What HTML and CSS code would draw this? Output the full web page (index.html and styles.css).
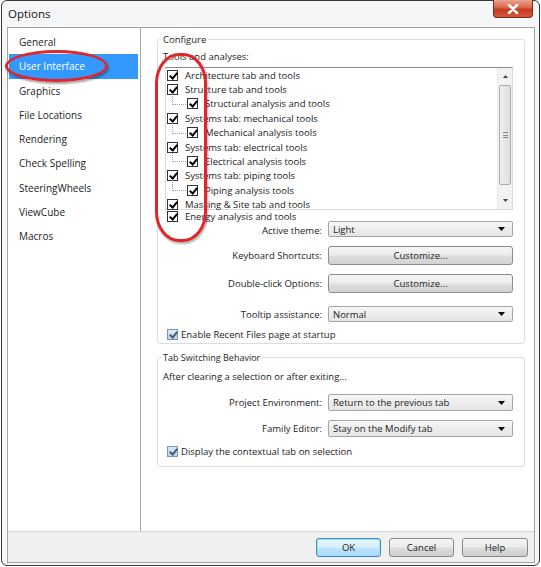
FILE: index.html
```html
<!DOCTYPE html>
<html>
<head>
<meta charset="utf-8">
<link rel="stylesheet" href="styles.css">
</head>
<body>
<div class="window">
  <div class="titlebar">
    <span class="title">Options</span>
    <div class="close"><svg width="12" height="10" viewBox="0 0 12 10"><path d="M2 1 L10 9 M10 1 L2 9" stroke="#fff" stroke-width="2.6" stroke-linecap="round"/></svg></div>
  </div>
  <div class="frame">
    <div class="main">
      <ul class="nav">
        <li>General</li>
        <li class="active">User Interface</li>
        <li>Graphics</li>
        <li>File Locations</li>
        <li>Rendering</li>
        <li>Check Spelling</li>
        <li>SteeringWheels</li>
        <li>ViewCube</li>
        <li>Macros</li>
      </ul>
      <div class="panel">
        <fieldset class="group configure">
          <legend>Configure</legend>
          <div class="sub">Tools and analyses:</div>
          <div class="listbox">
            <div class="rows">
              <div class="row"><span class="cb"></span><span>Architecture tab and tools</span></div>
              <div class="row"><span class="cb"></span><span>Structure tab and tools</span></div>
              <div class="row child"><span class="indent"></span><span class="cb"></span><span>Structural analysis and tools</span></div>
              <div class="row"><span class="cb"></span><span>Systems tab: mechanical tools</span></div>
              <div class="row child"><span class="indent"></span><span class="cb"></span><span>Mechanical analysis tools</span></div>
              <div class="row"><span class="cb"></span><span>Systems tab: electrical tools</span></div>
              <div class="row child"><span class="indent"></span><span class="cb"></span><span>Electrical analysis tools</span></div>
              <div class="row"><span class="cb"></span><span>Systems tab: piping tools</span></div>
              <div class="row child"><span class="indent"></span><span class="cb"></span><span>Piping analysis tools</span></div>
              <div class="row"><span class="cb"></span><span>Massing &amp; Site tab and tools</span></div>
              <div class="row last"><span class="cb"></span><span>Energy analysis and tools</span></div>
            </div>
            <div class="scrollbar">
              <div class="sb-btn"><svg width="5" height="3" viewBox="0 0 5 3"><path d="M0 3 L2.5 0 L5 3Z" fill="#404040"/></svg></div>
              <div class="thumb"><span class="grip"></span></div>
              <div class="sb-fill"></div>
              <div class="sb-btn"><svg width="5" height="3" viewBox="0 0 5 3"><path d="M0 0 L2.5 3 L5 0Z" fill="#404040"/></svg></div>
            </div>
          </div>
          <div class="form first">
            <div class="frow short">
              <span class="lbl theme">Active theme:</span>
              <div class="select">Light<svg class="arrow" width="7" height="4" viewBox="0 0 7 4"><path d="M0 0 L3.5 4 L7 0Z" fill="#000"/></svg></div>
            </div>
            <div class="frow tall">
              <span class="lbl">Keyboard Shortcuts:</span>
              <div class="button">Customize...</div>
            </div>
            <div class="frow tall">
              <span class="lbl">Double-click Options:</span>
              <div class="button">Customize...</div>
            </div>
            <div class="frow short spaced">
              <span class="lbl">Tooltip assistance:</span>
              <div class="select">Normal<svg class="arrow" width="7" height="4" viewBox="0 0 7 4"><path d="M0 0 L3.5 4 L7 0Z" fill="#000"/></svg></div>
            </div>
          </div>
          <div class="checkrow recent"><span class="cb blue"></span><span>Enable Recent Files page at startup</span></div>
        </fieldset>
        <fieldset class="group tabs">
          <legend>Tab Switching Behavior</legend>
          <div class="after">After clearing a selection or after exiting...</div>
          <div class="form second">
            <div class="frow mid">
              <span class="lbl">Project Environment:</span>
              <div class="select">Return to the previous tab<svg class="arrow" width="7" height="4" viewBox="0 0 7 4"><path d="M0 0 L3.5 4 L7 0Z" fill="#000"/></svg></div>
            </div>
            <div class="frow mid">
              <span class="lbl">Family Editor:</span>
              <div class="select">Stay on the Modify tab<svg class="arrow" width="7" height="4" viewBox="0 0 7 4"><path d="M0 0 L3.5 4 L7 0Z" fill="#000"/></svg></div>
            </div>
          </div>
          <div class="checkrow display"><span class="cb blue"></span><span>Display the contextual tab on selection</span></div>
        </fieldset>
      </div>
    </div>
    <div class="footer">
      <div class="btn ok">OK</div>
      <div class="btn">Cancel</div>
      <div class="btn help">Help</div>
    </div>
  </div>
  <div class="mark-ellipse"></div>
  <div class="mark-rect"></div>
</div>
</body>
</html>
```
FILE: styles.css
```css
* { box-sizing: border-box; }
html, body { margin: 0; padding: 0; background: #fff; }
body {
  width: 541px; height: 567px; overflow: hidden;
  font-family: "Open Sans", "Noto Sans", sans-serif;
  font-size: 9.5px; color: #1b1b1b;
}
.window {
  position: relative;
  width: 539px; height: 566px; margin-left: 1px;
  border: 1px solid #3a3a3a; border-radius: 6px;
  background: #f5f6f7;
  display: flex; flex-direction: column;
  padding: 0 4px 2px 5px;
}
.titlebar {
  height: 26px; flex: none;
  display: flex; justify-content: space-between; align-items: flex-start;
}
.title { font-size: 11.5px; margin: 5px 0 0 1px; color: #111; }
.close {
  width: 40px; height: 18px; margin: -1px 2px 0 0;
  border: 1px solid #7a2a1c; border-top: none;
  border-radius: 0 0 4px 4px;
  background: linear-gradient(#eba48f 0%, #da644a 45%, #c63a20 55%, #d5583a 100%);
  display: flex; align-items: center; justify-content: center;
}
.frame {
  flex: 1; border: 1px solid #a3a3a3; background: #fff;
  display: flex; flex-direction: column;
}
.main { flex: 1; display: flex; min-height: 0; }
.nav {
  list-style: none; margin: 0; width: 133px; flex: none;
  padding: 2px 2px 0 1px; border-right: 1px solid #a8a8a8;
}
.nav li { height: 24.3px; line-height: 24.3px; padding-left: 10px; font-size: 10px; color: #222; }
.nav li.active { background: #3399ff; color: #fff; }
.panel { flex: 1; padding: 5px 10px 0 16px; }
.group {
  margin: 0; border: 1px solid #d5dfe5; border-radius: 3px;
  padding: 0 11px 0 5px;
}
.group legend { padding: 0 2px; margin-left: -2px; line-height: 13px; font-size: 9.5px; color: #1e1e1e; }
.configure { padding-bottom: 3px; }
.sub { margin-top: 4px; line-height: 14px; }
.listbox {
  margin: 3px 0 0 2px; height: 143px;
  border: 1px solid #dadada; border-top-color: #8c8c8c;
  display: flex;
}
.rows { flex: 1; }
.row { display: flex; align-items: center; height: 14.4px; line-height: 11px; padding-left: 1px; white-space: nowrap; }
.row.last { height: 9px; }
.row .cb { margin-right: 7px; }
.indent { width: 20px; height: 100%; flex: none; position: relative; }
.indent::before {
  content: ""; position: absolute; left: 5px; top: -3px; width: 13px; height: 10px;
  border-left: 1px dotted #a0a0a0; border-bottom: 1px dotted #a0a0a0;
}
.cb {
  width: 11px; height: 11px; flex: none; position: relative;
  border: 1px solid #333; background: #fff;
}
.cb::after {
  content: ""; position: absolute; left: 3px; top: 0px; width: 3px; height: 6px;
  border: solid #000; border-width: 0 2px 2px 0; transform: rotate(40deg);
}
.cb.blue { border-color: #7d97b4; background: linear-gradient(#dbe9f6, #b9d3ec); }
.cb.blue::after { border-color: #4a5a6e; }
.scrollbar {
  width: 15px; flex: none; background: #f2f2f2; border-left: 1px solid #ececec;
  display: flex; flex-direction: column;
}
.sb-btn { height: 17px; display: flex; align-items: center; justify-content: center; flex: none; }
.thumb {
  height: 100px; margin: 0 1px; flex: none;
  border: 1px solid #acacac; border-radius: 2px;
  background: linear-gradient(90deg, #efefef, #dedede);
  display: flex; align-items: center; justify-content: center;
}
.grip { width: 5px; height: 6px; border-top: 1px solid #888; border-bottom: 1px solid #888; position: relative; }
.grip::after { content: ""; position: absolute; left: 0; right: 0; top: 2px; border-top: 1px solid #888; }
.sb-fill { flex: 1; }
.form { display: flex; flex-direction: column; gap: 9px; }
.form.first { margin-top: 11px; }
.form.second { margin-top: 10px; }
.frow { display: grid; grid-template-columns: 159px 185px; column-gap: 6px; align-items: center; }
.frow.short { height: 16px; }
.frow.mid { height: 17px; }
.frow.tall { height: 19px; }
.frow.spaced { margin-top: 4px; }
.lbl { text-align: right; white-space: nowrap; color: #222; line-height: 11px; }
.lbl.theme { padding-top: 2px; }
.select {
  height: 100%; position: relative;
  border: 1px solid #a5a5a5; border-radius: 2px;
  background: linear-gradient(#f7f7f7, #e4e4e4);
  padding-left: 4px; display: flex; align-items: center;
}
.select .arrow { position: absolute; right: 7px; top: 50%; margin-top: -2px; }
.button {
  height: 100%;
  border: 1px solid #8c8c8c; border-radius: 3px;
  background: linear-gradient(#f5f5f5 0%, #ececec 48%, #dedede 52%, #d3d3d3 100%);
  display: flex; align-items: center; justify-content: center;
}
.checkrow { display: flex; align-items: center; height: 12px; margin-left: 4px; gap: 3px; }
.checkrow.recent { margin-top: 6px; }
.tabs { margin-top: 7px; padding-bottom: 9px; }
.tabs legend { font-size: 9px; }
.after { margin-top: 6px; line-height: 14px; }
.checkrow.display { margin-top: 8px; }
.footer {
  height: 31px; flex: none;
  border-top: 1px solid #d6d6d6; background: #f0f0f0;
  display: flex; justify-content: flex-end; gap: 8px;
  padding: 6px 6px 0 0;
}
.btn {
  width: 65px; height: 19px;
  border: 1px solid #8a8a8a; border-radius: 3px;
  background: linear-gradient(#f4f4f4 0%, #ebebeb 48%, #dddddd 52%, #cfcfcf 100%);
  display: flex; align-items: center; justify-content: center; color: #222;
}
.btn.help { width: 66px; }
.btn.ok {
  border-color: #3c8dc4;
  background: linear-gradient(#eaf6fd 0%, #d9f0fc 48%, #bee6fd 52%, #a7d9f5 100%);
  box-shadow: inset 0 0 0 1px #9fdcf8;
}
.mark-ellipse {
  position: absolute; left: 3px; top: 49px; width: 103px; height: 32px;
  border: 3px solid #e0262b; border-radius: 50%;
  box-shadow: 1px 2px 2px rgba(0,0,0,0.35);
}
.mark-rect {
  position: absolute; left: 153px; top: 52px; width: 52px; height: 189px;
  border: 3px solid #e0262b; border-radius: 24px / 30px;
  box-shadow: 1px 2px 2px rgba(0,0,0,0.3);
}
```
